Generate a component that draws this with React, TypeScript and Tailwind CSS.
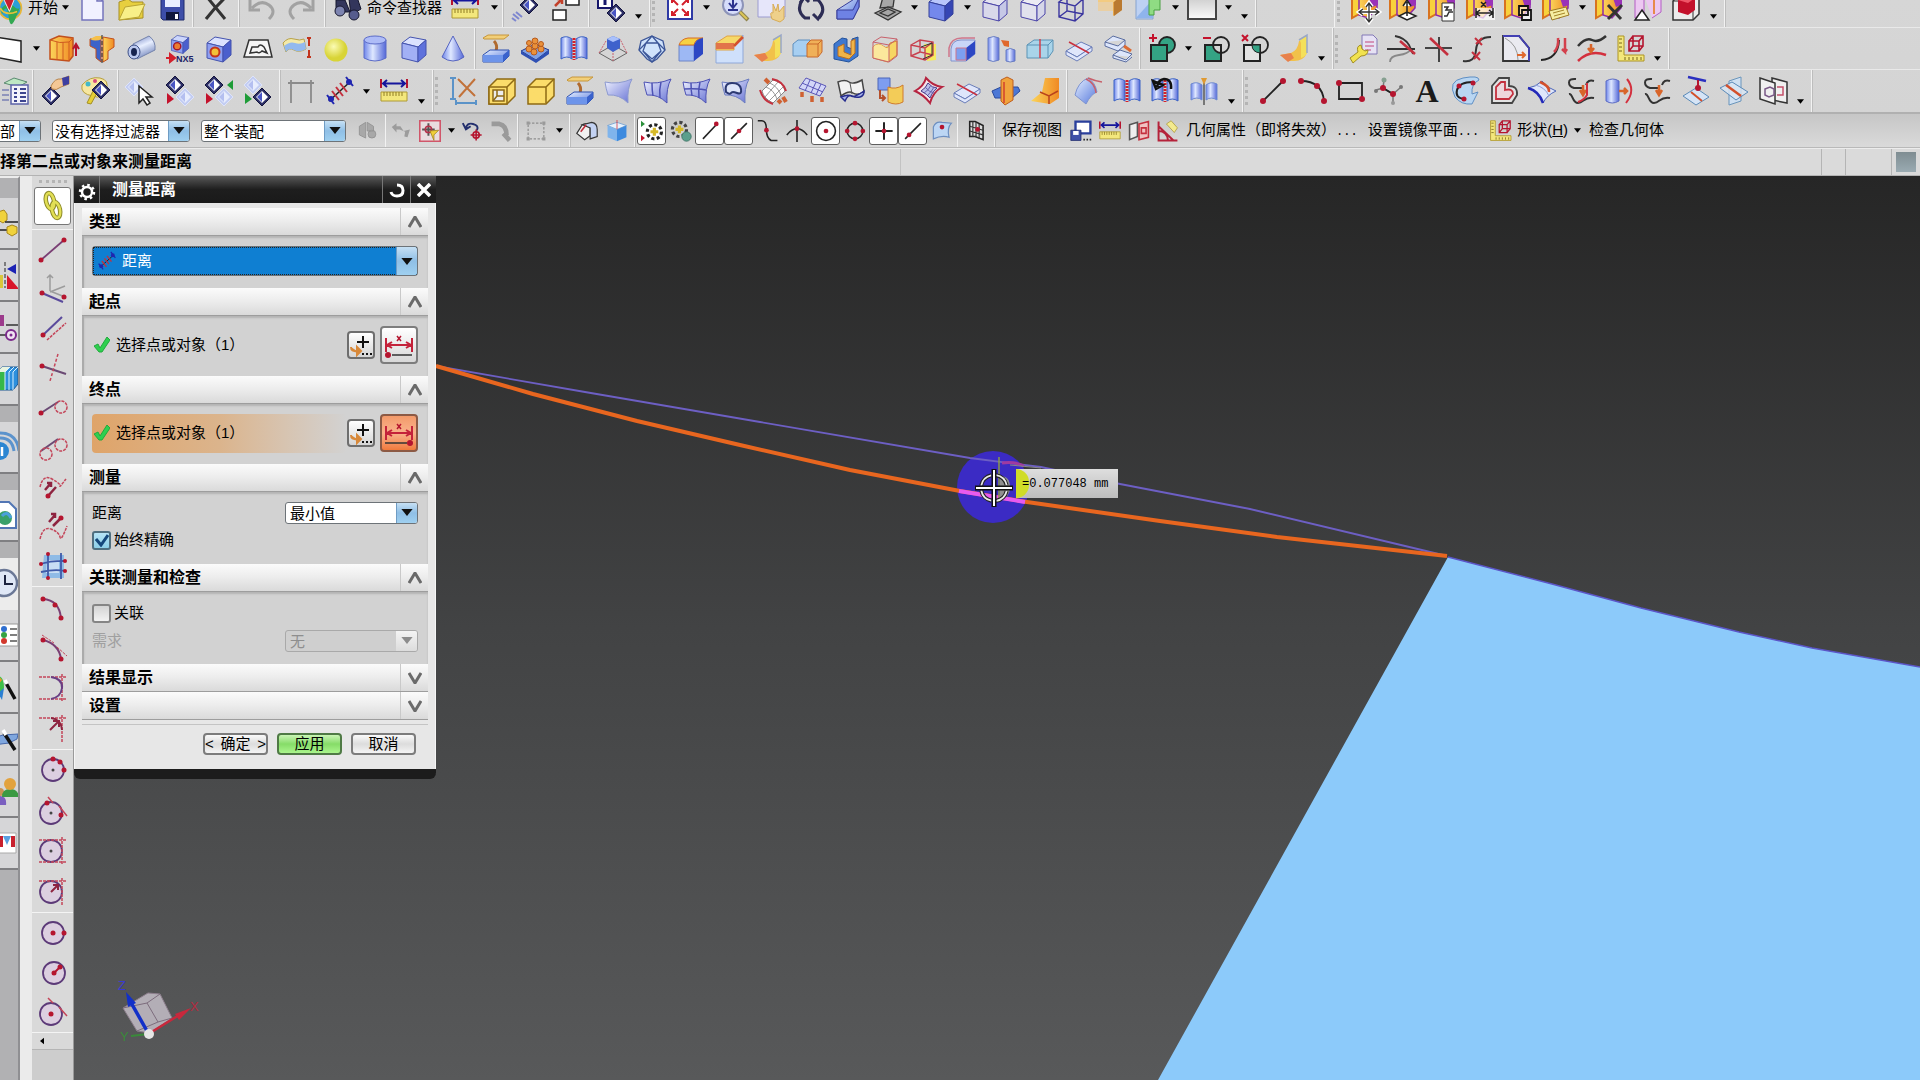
import { useState, type ReactNode } from "react";
import clsx from "clsx";

type CubeProps = { top: string; front: string; side: string; line: string };

function Cube({ top, front, side, line }: CubeProps) {
    return (
        <g stroke={line} strokeWidth="1" strokeLinejoin="round">
            <path d="M2 8 10 2 26 5 18 12z" fill={top} />
            <path d="M2 8 18 12V27L2 23z" fill={front} />
            <path d="M18 12 26 5V20L18 27z" fill={side} />
        </g>
    );
}

function Diamond({ x, y, pale }: { x: number; y: number; pale?: boolean }) {
    return (
        <g transform={`translate(${x} ${y})`}>
            <path
                d="M0-9 9 0 0 9-9 0z"
                fill={pale ? "#c3cdf2" : "#2c2f66"}
                stroke={pale ? "#dde3fa" : "#14143c"}
            />
            <path d="M0-6 6 0 0 6-6 0z" fill={pale ? "#e8edfd" : "#fff"} />
            <path d="M0-5V5L-5 0z" fill={pale ? "#b4bff0" : "#4a56c4"} />
        </g>
    );
}

function Dots({ at, r = 2 }: { at: number[][]; r?: number }) {
    return (
        <>
            {at.map(([x, y]) => (
                <circle key={`${x}-${y}`} cx={x} cy={y} r={r} fill="#b5152f" />
            ))}
        </>
    );
}

const book = (
    <g stroke="#3b62c4">
        <path d="M1 3q6-3 11 1v20q-5-4-11 0z" fill="url(#cyl)" />
        <path d="M27 3q-6-3-11 1v20q5-4 11 0z" fill="url(#cyl)" />
        <path d="M14 3v22" stroke="#d3202c" strokeWidth="3" strokeDasharray="2 1" />
    </g>
);

const ruler = (
    <>
        <path d="M1 2v9M27 2v9" stroke="#b5152f" strokeWidth="2" />
        <path d="M3 6.500h22M7 3 3 6.500 7 10M21 3l4 3.500L21 10" stroke="#15159c" strokeWidth="2" fill="none" />
        <path d="M1 15h26v9H1z" fill="#f3e77c" stroke="#ae9a35" />
        <path d="M4 15v4m3-4v4m3-4v4m3-4v4m3-4v4m3-4v4m3-4v4" stroke="#8f7c25" />
    </>
);

const extrudeSheet = (
    <>
        <path d="M1 3 6 0h21l-5 4H2z" fill="#f2cf78" stroke="#c6963c" />
        <path d="M12 6q4 4 2 10" stroke="#b06a2e" strokeWidth="3" />
        <path d="M1 20 8 15h19v6l-6 6H1z" fill="url(#blue)" stroke="#2c4fae" />
        <path d="M1 20h20v7l6-6v-6l-6 5" fill="#3a62cc" />
        <path d="M1 20h20v7H1z" fill="#6d94ea" />
    </>
);

const orangeFace = (
    <>
        <path d="M1 3 10 1v18L1 24z" fill="#f8d13c" stroke="#d8731f" strokeWidth="2" />
        <path d="M8 2h18v12l-9 10-9-3z" fill="url(#gold)" stroke="#8d2aa8" strokeWidth="1.500" />
        <path d="M17 1h10v10l-6 2z" fill="#9a32b8" />
    </>
);

const measureCube = (
    <>
        <path d="M2 1h6v19h20v6H2z" fill="#f3e77c" stroke="#ad9422" />
        <path d="M3 4h3M3 8h3M3 12h3M3 16h3M9 22v3m4-3v3m4-3v3m4-3v3m4-3v3" stroke="#77661c" />
        <path d="M13 6h10v10H13zM17 1h10v10H17zM13 6l4-5m6 5 4-5m-4 15 4-5m-14 5 4-5" stroke="#b5152f" strokeWidth="1.600" fill="none" />
    </>
);

const thinSlab = (
    <g fill="#dfe6fb" stroke="#6a7db8">
        <path d="M1 16 16 7l11 5-15 10z" />
        <path d="M1 16v4l11 6 15-10v-4L12 22z" />
        <path d="M4 7l20 11" stroke="#c9303e" strokeWidth="1.500" />
    </g>
);

const sBend = (
    <>
        <path d="M9 2C-1 1 1 9 7 11h8M27 4q-6-2-8 4M2 17c4-1 3 9 9 9s6-7 16-5" stroke="#333" strokeWidth="2" fill="none" />
        <path d="M16 8v8m-3-3 3 5 3-5" stroke="#d8652a" strokeWidth="2.500" fill="none" />
    </>
);

const icons: Record<string, ReactNode> = {
    globe: (
        <>
            <circle cx="12" cy="14" r="13" fill="#2c9fd6" stroke="#e8b637" strokeWidth="2" />
            <path d="M2 14q8-8 14-2t8 0-5 12-9 0-8-2z" fill="#32a852" />
            <path d="M4 3l7 15 6-15z" fill="#c81e2e" stroke="#fff" />
            <path d="M0 14q6 10 20 4" stroke="#e8c23a" strokeWidth="2" />
        </>
    ),
    newFile: <path d="M4 1h15l6 6v19H4zM19 1v6h6" fill="#f1f1ff" stroke="#7474bd" strokeWidth="1.500" />,
    open: (
        <>
            <path d="M1 26V8l9-3 4 3h11v16z" fill="#e7cf3f" stroke="#a78f25" />
            <path d="M1 26 7 13l20-3-6 13z" fill="#f8ef88" stroke="#b9a435" />
        </>
    ),
    save: (
        <>
            <path d="M3 2h23v24H5l-2-2z" fill="#3d4ea8" stroke="#1f2a6c" />
            <path d="M7 2h15v11H7z" fill="#e9f0ff" />
            <path d="M8 18h13v8H8z" fill="#11183d" />
            <path d="M17 20h3v5h-3z" fill="#fff" />
        </>
    ),
    cut: <path d="M5 3 23 25M24 3Q14 12 4 25" stroke="#333" strokeWidth="3" fill="none" />,
    undo: <path d="M22 25q8-8 0-14T5 14M3 6v10h10" stroke="#a2a2a2" strokeWidth="3" fill="none" />,
    redo: <path d="M6 25q-8-8 0-14t17 3M25 6v10H15" stroke="#a2a2a2" strokeWidth="3" fill="none" />,
    binoculars: (
        <g fill="#33365c" stroke="#17182f">
            <path d="M3 6h9l5 12H3zM16 5l8-2 4 12-10 6z" />
            <circle cx="7" cy="17" r="5" fill="#7d84b0" />
            <circle cx="21" cy="21" r="5" fill="#565c8d" />
        </g>
    ),
    ruler,
    diamondMove: (
        <>
            <Diamond x={18} y={11} />
            <path d="M2 20l6 5M5 18l6 5M1 24l4 3" stroke="#7e87cf" strokeWidth="2" />
        </>
    ),
    windows: (
        <g fill="#fff" stroke="#222" strokeWidth="1.500">
            <path d="M14 2h13v9H14zM1 16h13v10H1z" />
            <path d="M3 12 10 5M5 5h5v5" stroke="#c2402a" strokeWidth="2.500" fill="none" />
        </g>
    ),
    diamondInfo: (
        <>
            <path d="M1 2h14v12H1z" fill="#fff" stroke="#17176a" strokeWidth="2" />
            <path d="M8 3v8" stroke="#17176a" strokeWidth="3" />
            <Diamond x={19} y={19} />
        </>
    ),
    fit: (
        <>
            <path d="M2 1h24v24H2z" fill="#fff" stroke="#2f3aa5" strokeWidth="2" />
            <path d="M12 11 6 5m0 4V5h4M16 11l6-6m-4 0h4v4M12 15l-6 6m0-4v4h4M16 15l6 6m-4 0h4v-4" stroke="#d3202c" strokeWidth="2" fill="none" />
        </>
    ),
    zoom: (
        <>
            <circle cx="13" cy="11" r="10" fill="#d5dcfa" stroke="#8c93b8" strokeWidth="2" />
            <path d="M13 5v8M9 9l4 5 4-5M8 16h10" stroke="#2b318e" strokeWidth="2" fill="none" />
            <path d="M20 18l8 8" stroke="#8f844e" strokeWidth="4" />
            <path d="M20 18l7 7" stroke="#dcc657" strokeWidth="2" />
        </>
    ),
    pan: (
        <>
            <path d="M0 0h27v23H0z" fill="#e6e6fa" stroke="#9c9cd0" />
            <path d="M14 25q-3-8 1-6V10l3 7 2-7 1 8 5-6v13l-4 3z" fill="#eed08a" stroke="#d7ac58" />
        </>
    ),
    rotate: (
        <g stroke="#2d2d55" strokeWidth="3" fill="none">
            <path d="M6 5Q-2 16 8 24h5M22 24q8-9-1-18h-5" />
            <path d="M3 9 7 3l5 5M25 19l-4 6-5-5" />
        </g>
    ),
    perspective: (
        <g stroke="#383f9a">
            <path d="M2 16 24 2v11l-6 12H2z" fill="url(#blue)" />
            <path d="M2 16h16l6-12v9l-6 12H2z" fill="#6e82e4" />
        </g>
    ),
    laptop: (
        <g stroke="#333" fill="#a6a6a6" strokeWidth="1.300">
            <path d="M6 14 9 3l12-4-2 14z" />
            <path d="M1 19l13-6 13 5-13 8zM6 19l8-4 7 3-7 4z" />
        </g>
    ),
    cubeBlue: <Cube top="#b9c6fb" front="#7488ec" side="#3646b4" line="#34409b" />,
    cubeLine: <Cube top="#e4e4ef" front="#d8d8ea" side="#c6c8e6" line="#4b44a8" />,
    cubeLine2: <Cube top="#ebebf3" front="#e1e1ed" side="#d6d7e8" line="#4b44a8" />,
    cubeWire: (
        <g stroke="#3a359f" strokeWidth="1.400" fill="none">
            <path d="M2 8 10 2 26 5 18 12zM2 8v15l16 4 8-7V5M18 12v15M10 2v15l16 3M10 17l-8 6" />
        </g>
    ),
    orangeBlock: (
        <>
            <path d="M2 1h24v15l-9 6v-5H2z" fill="#e5a74c" />
            <path d="M2 8h15v9H2z" fill="#e9cfa4" />
            <path d="M2 1h24l-8 7H2z" fill="#f3cb81" />
            <path d="M18 8v14l8-6V1z" fill="#ba7a31" />
        </>
    ),
    pageGreen: (
        <>
            <path d="M2 1h17v24H2z" fill="#bdd1f3" stroke="#86a3cf" />
            <path d="M2 24 19 5v19z" fill="#8fb4ec" />
            <path d="M15 5h11v11h-6v5h-5z" fill="#8fdc83" stroke="#48a040" />
        </>
    ),
    swatch: <path d="M0-1h28v26H0z" fill="url(#grey)" stroke="#444" strokeWidth="2" />,
    faceMove: (
        <>
            {orangeFace}
            <path d="M18 10v17M9 18h18M15 13l3-4 3 4M15 24l3 4 3-4M12 15l-4 3 4 3M24 15l4 3-4 3" stroke="#fff" strokeWidth="4" fill="none" />
            <path d="M18 10v17M9 18h18M15 13l3-4 3 4M15 24l3 4 3-4M12 15l-4 3 4 3M24 15l4 3-4 3" stroke="#333" strokeWidth="1.300" fill="none" />
        </>
    ),
    facePull: (
        <>
            {orangeFace}
            <path d="M18 22V8M14 12l4-6 4 6M10 22l8 4 9-4-9-4z" fill="#fff" stroke="#222" strokeWidth="1.500" />
        </>
    ),
    faceList: (
        <>
            {orangeFace}
            <path d="M14 9h12v18H14z" fill="#fff" stroke="#333" />
            <path d="M16 13h4l-2 3h6M16 22h3l2-4h4" stroke="#333" strokeWidth="1.500" fill="none" />
        </>
    ),
    faceDim: (
        <>
            {orangeFace}
            <path d="M9 14h20v12H9z" fill="#fff" fillOpacity=".7" />
            <path d="M10 19h17M10 14v10M27 14v10M15 8l5 5m0-5-5 5M14 16l-4 3 4 3M23 16l4 3-4 3" stroke="#222" strokeWidth="1.500" fill="none" />
        </>
    ),
    faceFrame: (
        <>
            {orangeFace}
            <path d="M15 12h9v9h-9zM18 16h9v10h-9z" fill="#fff" fillOpacity=".6" stroke="#111" strokeWidth="1.800" />
        </>
    ),
    faceNote: (
        <>
            {orangeFace}
            <path d="M7 17l17-4 3 8-17 5z" fill="#f6eda2" stroke="#9c7a22" />
            <path d="M11 19l11-3M12 22l11-3" stroke="#a48327" />
        </>
    ),
    faceDelete: (
        <>
            {orangeFace}
            <path d="M13 11 26 25M27 11 13 25" stroke="#333" strokeWidth="3" />
        </>
    ),
    faceTri: (
        <>
            <path d="M1 3 10 1v18L1 24zM10 1h17v17l-9 6" fill="#ecc8f1" stroke="#b35cc4" />
            <path d="M20 2v18" stroke="#e78a4a" strokeWidth="2" />
            <path d="M8 16l7 10H1z" fill="#fff" stroke="#222" strokeWidth="1.500" />
        </>
    ),
    redBox: (
        <>
            <path d="M1 7v19h20l6-6V1H7z" fill="#ececec" stroke="#333" strokeWidth="1.500" />
            <path d="M1 7h20v19M21 7l6-6" fill="none" stroke="#333" />
            <path d="M6 6 13 2l10 2v12l-7 5-10-3z" fill="#c3102b" />
            <path d="M6 6l10 3 7-5-10-2z" fill="#ee5668" />
        </>
    ),
    sheet: <path d="M0 2 26 6v21L0 22z" fill="#fff" stroke="#222" strokeWidth="1.500" />,
    extrude: (
        <>
            <path d="M1 5 10 1l14 2v18l-4 5L1 24z" fill="url(#gold)" stroke="#c2501d" strokeWidth="1.500" />
            <path d="M1 5q10 4 19 2l4-4M8 7v18M14 7v18M20 7v19" stroke="#cf5b20" />
            <path d="M27 21V10m-3 4 3-5 3 5" stroke="#b5152f" strokeWidth="2" fill="none" />
        </>
    ),
    revolve: (
        <>
            <path d="M2 4 13 2v25l-5-4v-9l-6-3z" fill="#3d63c9" stroke="#c2501d" />
            <path d="M2 4l6-3h6v3q-7 3-12 0z" fill="#f6c04a" />
            <path d="M15 2l11 2v8l-6 4v8l-5 3z" fill="url(#gold)" stroke="#c2501d" />
            <path d="M14 0v28" stroke="#222" strokeDasharray="4 2" />
        </>
    ),
    tube: (
        <>
            <path d="M6 9 22 1q7 5 6 14L10 24z" fill="url(#tube)" stroke="#7483ab" />
            <ellipse cx="7" cy="17" rx="6" ry="7" fill="#bac8ee" stroke="#3b4e86" />
            <ellipse cx="7" cy="17" rx="3" ry="4" fill="#16234f" />
        </>
    ),
    nx5: (
        <>
            <g transform="translate(4 -1) scale(.72)">
                <Cube top="#ccd6fc" front="#8e9ff1" side="#4b5fcd" line="#4453ae" />
                <circle cx="10" cy="17" r="5" fill="#ec7c31" stroke="#a3152a" strokeWidth="2" />
            </g>
            <path d="M0 23h7m-3-4 5 4-5 4z" stroke="#d3202c" strokeWidth="2" fill="#d3202c" />
            <text x="10" y="27" fontSize="9" fontWeight="700" fill="#222266" fontFamily="Liberation Sans, sans-serif">NX5</text>
        </>
    ),
    holeCube: (
        <>
            <Cube top="#dbe2fe" front="#8e9ff1" side="#4b5fcd" line="#4453ae" />
            <circle cx="10" cy="17" r="4.500" fill="#f2c23a" stroke="#c2341d" strokeWidth="2" />
        </>
    ),
    emboss: (
        <g fill="#f5f5f5" stroke="#333" strokeWidth="1.500">
            <path d="M5 5h19l4 17H0z" />
            <path d="M6 18l2-6h6q2-4 6 0l3 6-5-2q-3 3-5 1z" />
        </g>
    ),
    warp: (
        <>
            <path d="M0 8Q5 2 11 4t10 0l2 10q-7 4-12 1T3 17z" fill="#f3e9a8" stroke="#b8a24a" />
            <path d="M1 11Q7 6 12 8t10-1l1 7q-7 4-12 1T3 17z" fill="#93b9ee" />
            <path d="M26 2v9M26 15v8M24 3h4M24 22h4" stroke="#c2341d" strokeWidth="2" />
        </>
    ),
    sphere: <circle cx="14" cy="15" r="11.500" fill="url(#yellow)" />,
    cylinder: (
        <g stroke="#5c6cc8">
            <path d="M3 5v18q11 6 22 0V5" fill="url(#cyl)" />
            <ellipse cx="14" cy="5" rx="11" ry="4" fill="#aebcf7" />
        </g>
    ),
    cube: <Cube top="#dbe2fe" front="#a2b0f5" side="#5f72dc" line="#4453ae" />,
    cone: <path d="M14 1 25 22q-11 8-22 0z" fill="url(#cyl)" stroke="#5664c0" />,
    extrudeSheet,
    pattern: (
        <>
            <path d="M0 16 14 9l14 6-13 10z" fill="#7ea0e6" stroke="#213a90" />
            <path d="M0 16l15 9 13-10v4L15 28 0 19z" fill="#2f50b4" />
            <g fill="#ea923c" stroke="#b85a1c">
                <circle cx="8" cy="14" r="3" />
                <circle cx="14" cy="11" r="3" />
                <circle cx="20" cy="14" r="3" />
                <circle cx="13" cy="17" r="3" />
                <circle cx="14" cy="6" r="3" />
                <circle cx="8" cy="8" r="2.500" />
                <circle cx="20" cy="9" r="2.500" />
            </g>
        </>
    ),
    book,
    hull: (
        <>
            <path d="M0 18 14 10l14 8-14 8z" fill="none" stroke="#666" />
            <path d="M0 18 7 6M28 18 21 4M14 26V16" stroke="#c9606e" strokeDasharray="2 1" />
            <path d="M8 4 14 1l7 3v9l-7 4-6-4z" fill="#3e62cc" />
            <path d="M8 4 14 1l7 3-7 3z" fill="#a9c0fb" />
        </>
    ),
    gem: (
        <g fill="#cfe2fb" stroke="#3c5698" strokeWidth="1.300">
            <path d="M14 1 25 6l2 9-8 9-5 3-5-3-8-9 2-9z" />
            <path d="M8 8h12l3 8-9 8-9-8zM14 1 8 8 1 15M14 1l6 7 7 7M5 16l9 11 9-11" fill="none" />
        </g>
    ),
    blend: (
        <>
            <path d="M2 10h15v16H2z" fill="#9db8f4" stroke="#6e86c8" />
            <path d="M2 10q2-6 9-7h15q-8 1-9 7z" fill="#f6d143" stroke="#d76d24" />
            <path d="M17 10q2-6 9-7v16l-9 7z" fill="#2c47c4" />
        </>
    ),
    chamfer: (
        <>
            <path d="M1 8h18l9-8v28H1z" fill="#cfe0fb" stroke="#8fa8d8" />
            <path d="M1 8 12 1h15l-8 9v5H1z" fill="#f6d968" stroke="#e0a245" />
            <path d="M1 8h18v6H1z" fill="#e2754a" />
            <path d="M19 11l9-9" stroke="#d3512c" strokeWidth="2.500" fill="none" />
        </>
    ),
    bend: (
        <>
            <path d="M0 20l11-2q7-3 8-12l8-2v14q-4 9-15 8H8z" fill="#f1c14a" />
            <path d="M0 20l11-2 3 5-6 4z" fill="#e8814c" />
            <path d="M19 4l8-4v18q-2 4-6 5V8z" fill="#f4e05a" />
            <path d="M19 5l8-5v18" fill="none" stroke="#98a6c8" strokeWidth="1.500" />
        </>
    ),
    split: (
        <>
            <path d="M0 9 5 5h12v16H0z" fill="#a7cff2" stroke="#5f8fbe" />
            <path d="M14 9l4-4h11v12l-4 5H14z" fill="#f0b058" stroke="#c9682a" />
            <path d="M14 9h11l4-4M25 9v12" stroke="#c9682a" fill="none" />
        </>
    ),
    shell: (
        <>
            <path d="M2 9l8-6 5 1v8l5 2V4l6-2v19l-9 6-15-3z" fill="#3f78cf" stroke="#24539c" />
            <path d="M6 12l6-3v8l7 3V6l4-2v14l-6 6-11-3z" fill="#f0b448" stroke="#b96d1f" />
        </>
    ),
    trim: (
        <>
            <path d="M2 12q5-5 10-1t7-3l7-2v14l-9 7-15-4z" fill="#f7d663" stroke="#d78d2c" />
            <path d="M2 12q5-5 10-1t6 1v15l-16-4z" fill="#fbe79c" />
            <path d="M2 7 10 2l16 2-8 6zM2 7v16l16 4V10M26 4v17l-8 6" fill="none" stroke="#c8606a" />
        </>
    ),
    trimCube: (
        <>
            <path d="M14 9h12v16l-9 1z" fill="#f5ea62" />
            <path d="M1 10l9-5 13 2v13l-8 5-14-4zM1 10l14 3 8-6M15 13v12M10 5v12l13 3M10 17l-9 4" fill="none" stroke="#c8404e" strokeWidth="1.400" />
            <path d="M11 12 22 8v12l-9 4" fill="none" stroke="#333" />
        </>
    ),
    wrap: (
        <>
            <path d="M3 14q1-9 10-9h14v14l-9 7H3z" fill="#c8d6f8" stroke="#8292cc" />
            <path d="M1 22V13Q3 3 14 3h13" stroke="#d0768a" fill="none" strokeWidth="1.500" />
            <path d="M18 13l9-7v13l-9 7z" fill="#2c47c4" />
            <path d="M8 13h10v12H8z" fill="#7d9ff0" stroke="#d0768a" />
        </>
    ),
    cylPair: (
        <g stroke="#6a7ec2" fill="url(#cyl)">
            <path d="M1 3v22q5 3 11 0V3q-5-3-11 0z" />
            <path d="M19 15v11q4 2 9 0V15q-5-3-9 0z" />
            <path d="M14 5l8 1v6l-5-1z" fill="#e0682c" stroke="none" />
        </g>
    ),
    slabBlue: (
        <g stroke="#5b93b5">
            <path d="M1 10 8 5h19v11l-5 7H1z" fill="#a9d4ea" />
            <path d="M1 10h21l5-5M22 10v13" fill="none" />
            <path d="M14 4v19" stroke="#d3404c" strokeWidth="1.500" />
        </g>
    ),
    thinSlab,
    slabPair: (
        <g fill="#dde6fb" stroke="#5a6da0">
            <path d="M1 7 9 1l12 4-7 6zM1 7v4l13 5 7-6V5" />
            <path d="M9 20l7-5 12 4-6 6zM9 20v3l13 4 6-5" />
            <path d="M20 11l7 5" stroke="#dc6a32" strokeWidth="3" />
        </g>
    ),
    unite: (
        <>
            <circle cx="19" cy="10" r="8" fill="#34a384" stroke="#222" strokeWidth="1.800" />
            <path d="M3 10h16v16H3z" fill="#34a384" stroke="#222" strokeWidth="2" />
            <path d="M5-1v8M1 3h8" stroke="#c4122c" strokeWidth="2" />
        </>
    ),
    subtract: (
        <>
            <path d="M3 10h16v16H3z" fill="#34a384" stroke="#222" strokeWidth="2" />
            <circle cx="19" cy="10" r="8" fill="#d6d6d6" stroke="#222" strokeWidth="1.800" />
            <path d="M11 10h8v8" fill="none" stroke="#222" strokeWidth="2" />
            <path d="M1 3h8" stroke="#c4122c" strokeWidth="2" />
        </>
    ),
    intersect: (
        <>
            <circle cx="19" cy="10" r="8" fill="none" stroke="#222" strokeWidth="1.800" />
            <path d="M3 10h16v16H3z" fill="#e3e3e3" stroke="#222" strokeWidth="2" />
            <path d="M11 10h8v8q-8-1-8-8z" fill="#34a384" stroke="#222" />
            <path d="M1 0l6 6m0-6L1 6" stroke="#c4122c" strokeWidth="2" />
        </>
    ),
    noteWrench: (
        <>
            <path d="M13 0h11l4 4v15H13z" fill="#e6e2f4" stroke="#8278b6" />
            <path d="M16 7h9M16 11h9M16 15h6" stroke="#d07aa4" strokeWidth="1.500" />
            <path d="M1 23l8-6q-2-6 3-7l1 4 3 2 3-1q0 6-7 6l-8 7z" fill="#f1e24f" stroke="#a28e23" />
        </>
    ),
    curveJoin: (
        <>
            <path d="M3 27q0-6 9-7t12-6" stroke="#888" strokeWidth="1.800" fill="none" />
            <path d="M0 14h28M8 1q10 2 14 9l4 9" stroke="#333" strokeWidth="1.800" fill="none" />
            <path d="M13 6l15 13" stroke="#c4303e" strokeWidth="2.500" />
        </>
    ),
    curveCross: (
        <>
            <path d="M0 13h27M14 2v25" stroke="#444" strokeWidth="2" />
            <path d="M5 3l18 17" stroke="#c4303e" strokeWidth="2.500" />
        </>
    ),
    curveS: (
        <>
            <path d="M0 26q12 2 13-11T28 2" stroke="#333" strokeWidth="2" fill="none" />
            <path d="M12 3l7 7M19 3l-6 6M9 17l8 8m0-8-6 7" stroke="#c4303e" strokeWidth="2" />
        </>
    ),
    pageCorner: (
        <>
            <path d="M1 1h16l10 12v13H1z" fill="#eaeaf0" stroke="#333" strokeWidth="1.800" />
            <path d="M1 1h16l10 12v13" fill="none" stroke="#4340b4" strokeWidth="1.800" />
            <path d="M3 3q13 7 13 22" stroke="#999" fill="none" />
            <path d="M15 20h8m-3-3 3 3-3 3" stroke="#e0682c" strokeWidth="2" fill="none" />
        </>
    ),
    curveOffset: (
        <>
            <path d="M1 25q17-1 18-20" stroke="#222" strokeWidth="2" fill="none" />
            <path d="M18 3q1 9-4 14M25 3v14l-3-3m3 3 2-3" stroke="#d3404c" strokeWidth="2.500" fill="none" />
        </>
    ),
    curveProject: (
        <>
            <path d="M0 11q8-9 14-6t14-4" stroke="#333" strokeWidth="2.500" fill="none" />
            <path d="M0 26q12-12 28-6" stroke="#d3303e" strokeWidth="2.500" fill="none" />
            <path d="M13 9v6m-3-2 3 4 3-4" stroke="#d8652a" strokeWidth="2.500" fill="none" />
        </>
    ),
    measureCube,
    list: (
        <>
            <path d="M2 6 12 1l13 4-9 5z" fill="#bfe8c4" stroke="#5b8a70" />
            <path d="M9 8h17v19H9z" fill="#f3f3fb" stroke="#5c63a8" strokeWidth="1.500" />
            <path d="M12 12h3m3 0h6M12 16h3m3 0h6M12 20h3m3 0h6M12 24h3m3 0h6" stroke="#3d4590" strokeWidth="2" />
            <path d="M0 13h7M0 18h7M0 23h7" stroke="#7a80b4" strokeWidth="1.500" />
        </>
    ),
    diamondHand: (
        <>
            <Diamond x={10} y={19} />
            <path d="M10 9q4-8 10-7l8-3v8l-8 3q-5 4-9 2z" fill="#f3c795" stroke="#b9854c" />
            <path d="M21 1l7-2v8l-6 2z" fill="#3e3fa0" />
        </>
    ),
    palette: (
        <>
            <path d="M1 8q8-9 18-7t6 12-13 6q-13-2-11-11z" fill="#f7e7a0" stroke="#b79f3f" />
            <circle cx="7" cy="7" r="2.500" fill="#43b8c9" />
            <circle cx="14" cy="4" r="2" fill="#d6487e" />
            <path d="M6 26l6-12 4 2-6 11z" fill="#e6cf35" stroke="#a28e23" />
            <Diamond x={20} y={13} />
        </>
    ),
    pick: (
        <>
            <Diamond x={8} y={10} pale />
            <path d="M13 9v17l4-4 4 6 3-2-4-6h6z" fill="#fff" stroke="#222" strokeWidth="1.500" />
        </>
    ),
    hideOne: (
        <>
            <Diamond x={10} y={8} />
            <Diamond x={20} y={20} pale />
            <path d="M2 16v11l7-5z" fill="#c4122c" />
        </>
    ),
    hideSwap: (
        <>
            <Diamond x={10} y={8} />
            <Diamond x={20} y={20} pale />
            <path d="M2 16v11l7-5z" fill="#c4122c" />
            <path d="M29 3v10l-6-5z" fill="#1e9c37" />
        </>
    ),
    showOne: (
        <>
            <Diamond x={10} y={8} pale />
            <Diamond x={19} y={20} />
            <path d="M2 16v11l7-5z" fill="#1e9c37" />
        </>
    ),
    dimension: <path d="M4 3v23M24 3v23M1 6h26" stroke="#8b8b8b" strokeWidth="1.800" />,
    distance: (
        <>
            <path d="M3 24 25 4" stroke="#222" strokeWidth="1.500" />
            <path d="M6 14l7 9M10 10l7 9M14 6l7 9" stroke="#c4303e" strokeWidth="2" />
            <circle cx="5" cy="22" r="3" fill="#2026b0" />
            <circle cx="23" cy="5" r="3" fill="#2026b0" />
            <path d="M1 18l7 9M20 0l7 9" stroke="#2026b0" strokeWidth="2" />
        </>
    ),
    sketchDim: (
        <>
            <path d="M1 1h6M4 1v21M1 22h6M7 26h20M7 23v5M27 23v5" stroke="#5b93c8" strokeWidth="2" />
            <path d="M9 2l17 17M26 2 10 20" stroke="#c2723a" strokeWidth="2" />
        </>
    ),
    boxOpen: (
        <g stroke="#8e6a14" strokeWidth="1.500" fill="#fbdc6a">
            <path d="M1 10 9 2h18v17l-8 8H1z" />
            <path d="M1 10h18v17H1zM19 10l8-8" />
            <path d="M5 13h11v11H5z" fill="#ececec" />
            <path d="M5 24l4-5V13m0 6h7" fill="none" />
        </g>
    ),
    boxFull: (
        <g stroke="#8e6a14" strokeWidth="1.500" fill="#fbdc6a">
            <path d="M1 10 9 2h18v17l-8 8H1z" />
            <path d="M1 10h18v17M19 10l8-8" />
        </g>
    ),
    surf1: <path d="M1 5q13 3 27-3-5 9-4 24-9-9-20-8-2-6-3-13z" fill="url(#surf)" stroke="#8d9ad0" />,
    surf2: (
        <g stroke="#4d52b4">
            <path d="M1 5q13 3 27-3-5 9-4 24-9-9-20-8-2-6-3-13z" fill="url(#surf)" />
            <path d="M9 6q0 7 1 13M18 5q-2 8-1 16" strokeWidth="1.500" />
        </g>
    ),
    surf3: (
        <g stroke="#4d52b4">
            <path d="M1 5q13 3 27-3-5 9-4 24-9-9-20-8-2-6-3-13z" fill="url(#surf)" />
            <path d="M9 6q0 7 1 13M18 5q-2 8-1 16M2 12q13-1 22 1" fill="none" strokeWidth="1.500" />
        </g>
    ),
    surf4: (
        <g stroke="#6b7cc0">
            <path d="M1 5q13 3 27-3-5 9-4 24-9-9-20-8-2-6-3-13z" fill="url(#surf)" />
            <path d="M5 15q-2-9 6-9t9 6-4 4-6 0-5-1z" fill="#dfe6fa" stroke="#2d3a72" strokeWidth="2" />
        </g>
    ),
    netRed: (
        <>
            <path d="M3 14 14 3q10 2 12 11L14 26Q5 22 3 14z" fill="#fff" stroke="#888" />
            <path d="M7 10q8 3 11 12M11 6q8 4 11 12M6 20 19 5M10 24 24 10" stroke="#999" />
            <path d="M13 2q11 2 14 12M1 13q3 11 13 14" stroke="#c4303e" strokeWidth="2" fill="none" />
            <path d="M6 2l4 4M24 20l3 5M19 23l3 3" stroke="#cf6132" strokeWidth="4" />
        </>
    ),
    netPins: (
        <>
            <path d="M8 1l20 8-6 10L1 11z" fill="#d3d6f8" stroke="#5b57b8" />
            <path d="M4 6l21 9M12 3 7 14M18 5l-5 11M23 7l-5 11" stroke="#5b57b8" />
            <path d="M4 15v5M14 19v6M24 20v5" stroke="#cf6132" strokeWidth="3.500" />
        </>
    ),
    bookOpen: (
        <>
            <path d="M1 5q7-3 11 0t13-2l2 12q-7 4-11 1T4 19z" fill="#f1f1f1" stroke="#444" strokeWidth="1.500" />
            <path d="M4 20q7-3 10-1t13-5q0 5-4 6t-8-1-7 5z" fill="#a7b4ea" stroke="#262c8e" strokeWidth="1.500" />
            <path d="M13 6l2 11" stroke="#555" />
        </>
    ),
    surfFlip: (
        <>
            <path d="M2 1h12v12H2z" fill="#7e9df0" stroke="#4c66b8" />
            <path d="M12 10q8 3 15-2v17q-7 4-15 0z" fill="#f3cc58" stroke="#cf7b2c" />
            <path d="M4 13v8h5m-3-3 3 3-3 3" stroke="#b5502c" strokeWidth="2" fill="none" />
        </>
    ),
    rugRed: (
        <>
            <path d="M1 14Q10 9 12 1q7 8 16 9-9 5-12 16-6-8-15-12z" fill="#f4e4ea" stroke="#b62440" strokeWidth="2" />
            <path d="M7 14q5-3 7-8 4 5 9 5-5 4-7 10-3-4-9-7z" fill="#b9bfe8" stroke="#4a3a88" />
            <path d="M10 16q5-3 7-8M14 18q4-4 6-8M11 10q4 5 9 6" stroke="#6a64b0" />
        </>
    ),
    crossBlocks: (
        <>
            <path d="M0 14l9-4h17l2 4-8 7H3z" fill="#4c78d6" stroke="#2a4a9c" />
            <path d="M9 3l6-3 6 3v20l-8 5-4-4z" fill="#f0a33c" stroke="#bf5d1e" />
            <path d="M12 5v21" stroke="#d3402c" strokeWidth="1.500" />
        </>
    ),
    goldFold: (
        <>
            <path d="M14 1h14v20l-9 6-19-3 11-9z" fill="url(#gold)" />
            <path d="M9 15l9 4 9-5M18 19v8" stroke="#b9431c" strokeWidth="1.500" fill="none" />
        </>
    ),
    surfCurl: (
        <>
            <path d="M1 18Q4 5 14 1q7 4 9 14-6 2-11 12z" fill="url(#blue)" stroke="#7d93d0" />
            <path d="M12 2q9 4 10 14M14 1q7 3 14 4" stroke="#c8606a" strokeWidth="1.500" fill="none" />
        </>
    ),
    bookTurn: (
        <>
            {book}
            <path d="M20 12q1-10-7-10-6 1-7 8M2 4l3 8 7-4z" stroke="#111" strokeWidth="2.500" fill="none" />
        </>
    ),
    bookPin: (
        <>
            <path d="M1 7q6-3 11 1v15q-5-4-11 0z" fill="url(#cyl)" stroke="#6e8ad0" />
            <path d="M27 7q-6-3-11 1v15q5-4 11 0z" fill="url(#cyl)" stroke="#6e8ad0" />
            <path d="M14 6v22" stroke="#777" strokeWidth="2" />
            <path d="M11 1h6l-3 7z" fill="#e09a32" />
        </>
    ),
    line: (
        <>
            <path d="M4 24 24 4" stroke="#222" strokeWidth="1.800" />
            <Dots r={3} at={[[4, 24], [24, 4]]} />
        </>
    ),
    arc: (
        <>
            <path d="M3 4q21 0 23 20" stroke="#222" strokeWidth="1.800" fill="none" />
            <Dots r={3} at={[[3, 4], [19, 9], [26, 24]]} />
        </>
    ),
    rect: (
        <>
            <path d="M3 6h23v16H3z" stroke="#222" strokeWidth="1.800" fill="none" />
            <Dots r={3} at={[[3, 6], [26, 22]]} />
        </>
    ),
    spline: (
        <>
            <path d="M2 13l7-2 10 6 7-6M9 11l1-8M19 17v9" stroke="#777" strokeWidth="1.500" fill="none" />
            <path d="M9 11l10 6" stroke="#222" strokeWidth="2" />
            <Dots r={3} at={[[9, 11], [19, 17]]} />
            <circle cx="10" cy="3" r="2.500" fill="#86a090" />
            <circle cx="2" cy="14" r="2" fill="#777" />
            <circle cx="19" cy="26" r="2" fill="#999" />
            <circle cx="27" cy="10" r="2" fill="#777" />
        </>
    ),
    letter: (
        <text x="14" y="25" textAnchor="middle" fontSize="32" fontWeight="700" fill="#1b1b1b" fontFamily="Liberation Serif, serif">A</text>
    ),
    surfPoints: (
        <>
            <path d="M4 20Q-4 4 12 1t16 2q-8 4-7 14l6-2-6 12q-11 1-17-7z" fill="#b9d6f2" stroke="#5f8fc4" />
            <path d="M13 22q-9-1-7-9t16-8" stroke="#222" strokeWidth="2" fill="none" />
            <Dots r={2.500} at={[[8, 9], [22, 6], [13, 22]]} />
        </>
    ),
    heartShape: (
        <>
            <path d="M2 26V9l7-8h10v8q9 0 8 9l-5 8z" fill="#e3e3e3" stroke="#444" strokeWidth="1.800" />
            <path d="M6 22V10l5-5h4v8q8-2 8 4l-4 5z" fill="#eed7dc" stroke="#c4303e" strokeWidth="1.800" />
        </>
    ),
    surfCurve: (
        <>
            <path d="M0 11q8-1 14-7 5 7 14 10-9 4-13 12-5-11-15-15z" fill="#dfe7fb" stroke="#4d67bc" />
            <path d="M0 11q11 3 15 15" stroke="#2429b8" strokeWidth="2.500" fill="none" />
            <path d="M7 8q10 2 14 11" stroke="#8f9fd8" fill="none" />
            <path d="M12 5q10 4 9 10" stroke="#d3502c" strokeWidth="2.500" fill="none" />
        </>
    ),
    sBendRed: (
        <>
            {sBend}
            <path d="M20 6v12q-3 5-9 7" stroke="#d3303e" strokeWidth="2" fill="none" />
        </>
    ),
    sBend,
    cylProject: (
        <>
            <path d="M1 4v20q6 4 13 0V4q-6-4-13 0z" fill="url(#cyl)" stroke="#5c6cc4" />
            <path d="M22 2q9 11-1 24" stroke="#d3303e" strokeWidth="2" fill="none" />
            <path d="M14 14h7m-2-3 3 3-3 3" stroke="#d8652a" strokeWidth="2.500" fill="none" />
        </>
    ),
    pinPlane: (
        <>
            <path d="M1 19 14 11l13 9-13 8z" fill="#d5e4f6" stroke="#5a8ab8" />
            <path d="M9 15l11 9" stroke="#d3502c" strokeWidth="2" />
            <path d="M6 0l18 4" stroke="#2a2fc0" strokeWidth="2.500" />
            <path d="M16 3v7" stroke="#b5152f" strokeWidth="2" />
            <Dots r={3} at={[[16, 11]]} />
        </>
    ),
    planeCut: (
        <>
            <path d="M9 4l12-4v24L9 28z" fill="#cfe0f2" stroke="#6a95bb" />
            <path d="M0 11 12 5l16 10-12 8z" fill="#dae6f4" fillOpacity=".8" stroke="#5a8ab8" />
            <path d="M6 8l15 11" stroke="#d3502c" strokeWidth="2.500" />
        </>
    ),
    mirrorPages: (
        <g stroke="#333" strokeWidth="1.500" fill="#f0f0f0">
            <path d="M13 1l15 4v21l-15-3z" />
            <path d="M1 1l15 5v21L1 22z" />
            <path d="M6 12l5-2 4 2v6l-5 2-4-2z" fill="none" stroke="#7a5a88" />
            <path d="M18 10h6v8h-6" fill="none" stroke="#c4506a" />
        </g>
    ),
    // selection bar
    grpGrey: <path d="M3 8l8-5v20l-8-4zM13 3l8 5v6h-8zM14 18a5 5 0 1 0 10 0 5 5 0 1 0-10 0" fill="#a8a8a8" stroke="#8f8f8f" />,
    branch: <path d="M1 9l6-5v4h5l4 6 8-2-3 10-4-1 1-6-7-3H7v4z" fill="#9c9c9c" />,
    snapSketch: (
        <>
            <path d="M1 1h26v26H1z" fill="#e9dcdf" stroke="#d0566a" strokeWidth="2" />
            <path d="M12 4v16M4 12h16" stroke="#555" strokeWidth="2.500" />
            <circle cx="12" cy="12" r="4" stroke="#b5304a" strokeWidth="2" />
            <path d="M14 14l11-1-6 6v7z" fill="#f0cf3b" stroke="#a28320" />
        </>
    ),
    snapUndo: (
        <>
            <path d="M5 11q1-8 9-6t5 8M1 4l4 8 6-4" stroke="#24306e" strokeWidth="2.500" fill="none" />
            <path d="M18 12v14M11 19h14" stroke="#b5152f" strokeWidth="2" />
            <circle cx="18" cy="19" r="4" fill="none" stroke="#b5152f" strokeWidth="2" />
        </>
    ),
    pathGrey: <path d="M2 5h10q9 2 9 14M17 17l8 9" stroke="#9a9a9a" strokeWidth="6" fill="none" />,
    marquee: (
        <>
            <path d="M4 4h20v20H4z" fill="none" stroke="#8d8d8d" strokeWidth="1.500" strokeDasharray="3 2" />
            <path d="M2 2h4v4H2zM22 2h4v4h-4zM2 22h4v4H2zM22 22h4v4h-4z" fill="#9a9a9a" />
        </>
    ),
    eraser: (
        <g stroke="#333" fill="#f1f1f1" strokeWidth="1.500">
            <path d="M1 17 8 6q6-3 10 2v12l-7 5z" />
            <path d="M8 6l12-3q7 1 7 9v9l-9 3V10z" fill="#c3d2f2" />
            <path d="M6 15l7-9" stroke="#c4303e" strokeWidth="2" />
        </g>
    ),
    boxBlue: (
        <>
            <path d="M2 7 14 3l12 4-12 5z" fill="#e6f1fc" stroke="#6d9bce" />
            <path d="M2 7v15l12 5V12z" fill="#7fb4ec" />
            <path d="M26 7v15l-12 5V12z" fill="#3d8ade" />
            <path d="M14 0v12" stroke="#d3303e" />
        </>
    ),
    snapAll: (
        <>
            <path d="M0 1v8l5-4z" fill="#2a8f3a" />
            <path d="M0 19v8l5-4z" fill="#c4122c" />
            <circle cx="17" cy="15" r="9" fill="none" stroke="#222" strokeWidth="4" strokeDasharray="4 3" />
            <path d="M12 15h10M17 10v10" stroke="#d6ba28" strokeWidth="4" />
        </>
    ),
    snapOff: (
        <>
            <circle cx="12" cy="12" r="9" fill="none" stroke="#444" strokeWidth="4" strokeDasharray="4 3" />
            <path d="M7 12h10M12 7v10" stroke="#d6ba28" strokeWidth="4" />
            <circle cx="21" cy="21" r="6" fill="#5b9f8c" stroke="#396e60" />
        </>
    ),
    snapEnd: (
        <>
            <path d="M5 24 22 6" stroke="#222" strokeWidth="2" />
            <Dots r={3} at={[[22, 5]]} />
        </>
    ),
    snapMid: (
        <>
            <path d="M4 24 24 4" stroke="#222" strokeWidth="2" />
            <Dots r={3} at={[[14, 14]]} />
        </>
    ),
    snapControl: (
        <>
            <path d="M1 1h5q6 0 6 11t6 14h8" stroke="#222" strokeWidth="2" fill="none" />
            <Dots r={3} at={[[12, 13]]} />
        </>
    ),
    snapCross: (
        <>
            <path d="M14 0v28M1 19q13-16 26 0" stroke="#222" strokeWidth="2" fill="none" />
            <Dots r={3} at={[[14, 11]]} />
        </>
    ),
    snapCenter: (
        <>
            <circle cx="14" cy="14" r="12" fill="none" stroke="#222" strokeWidth="2" />
            <Dots r={3} at={[[14, 14]]} />
        </>
    ),
    snapQuad: (
        <>
            <circle cx="14" cy="14" r="10" fill="none" stroke="#222" strokeWidth="2" />
            <Dots r={3} at={[[14, 4], [14, 24], [4, 14], [24, 14]]} />
        </>
    ),
    snapPoint: (
        <>
            <path d="M14 3v22M3 14h22" stroke="#222" strokeWidth="2.500" />
            <Dots r={3} at={[[14, 14]]} />
        </>
    ),
    snapOn: (
        <>
            <path d="M4 24 24 4" stroke="#222" strokeWidth="2" />
            <Dots r={3} at={[[9, 19]]} />
        </>
    ),
    snapFace: (
        <>
            <path d="M3 24V9Q6 1 14 3l12 1q-6 6-3 18-9-3-20 2z" fill="#bcd6f4" stroke="#6d8fc0" strokeWidth="1.500" />
            <Dots r={3} at={[[14, 9]]} />
        </>
    ),
    gridBook: (
        <>
            <path d="M6 2h7l10 5v18l-10-4H6z" fill="#ddd" stroke="#222" strokeWidth="2" />
            <path d="M10 2v19M14 3v19M18 5v19M6 8l17 5M6 14l17 5" stroke="#333" strokeWidth="1.500" />
            <Dots r={3} at={[[16, 12]]} />
        </>
    ),
    saveView: (
        <>
            <path d="M7 2h19v15H7z" fill="#fff" stroke="#2a3f9c" strokeWidth="3" />
            <path d="M1 13h13v13H1z" fill="#3f51a8" stroke="#1f2a6c" />
            <path d="M4 14h7v5H4z" fill="#fff" />
            <path d="M17 25h2m2 0h2m2 0h2" stroke="#222" strokeWidth="2" />
        </>
    ),
    mirror3d: (
        <>
            <path d="M2 6l10-3v18L2 25z" fill="#eee" stroke="#555" strokeWidth="2" />
            <path d="M14 5l12-3v20l-12 3z" fill="#f0c2c2" stroke="#c4303e" strokeWidth="2" />
            <path d="M17 10h6v7h-6z" fill="none" stroke="#c4303e" strokeWidth="2" />
        </>
    ),
    angle: (
        <>
            <path d="M2 2v24h24M2 14q11 0 12 12M2 8l19 18" stroke="#b5223a" strokeWidth="2.500" fill="none" />
            <path d="M12 5l6-4 8 9-4 6z" fill="#f3ea8e" stroke="#ad9b3b" />
        </>
    ),
    // curve bar at the left
    infer: (
        <g fill="none" stroke="#8d8a2a" strokeWidth="4.500">
            <ellipse cx="11" cy="9" rx="4" ry="8" transform="rotate(-12 11 9)" />
            <ellipse cx="17" cy="18" rx="4" ry="8" transform="rotate(-12 17 18)" />
            <g stroke="#e2df55" strokeWidth="2.500">
                <ellipse cx="11" cy="9" rx="4" ry="8" transform="rotate(-12 11 9)" />
                <ellipse cx="17" cy="18" rx="4" ry="8" transform="rotate(-12 17 18)" />
            </g>
        </g>
    ),
    vLine: (
        <>
            <path d="M2 24 25 4" stroke="#7a3f74" strokeWidth="1.800" />
            <Dots r={2.500} at={[[2, 24], [25, 4]]} />
        </>
    ),
    vAxes: (
        <>
            <path d="M11 16V1M11 17l15-6M11 16l15 6M8 3l3-3 3 3" stroke="#9c9c9c" strokeWidth="1.500" fill="none" />
            <path d="M3 18l21 9" stroke="#5a4a9c" strokeWidth="2" />
            <Dots r={2.500} at={[[3, 18], [25, 22]]} />
        </>
    ),
    vParallel: (
        <>
            <path d="M4 20 23 2" stroke="#5a4a9c" strokeWidth="2" />
            <path d="M8 25 27 8" stroke="#c4465a" strokeWidth="1.500" strokeDasharray="3 1" />
            <Dots r={2.500} at={[[4, 20]]} />
        </>
    ),
    vPerp: (
        <>
            <path d="M3 12l24 8" stroke="#6b4a74" strokeWidth="2" />
            <path d="M19 0 11 27" stroke="#c4465a" strokeWidth="1.500" strokeDasharray="3 2" />
            <Dots r={2.500} at={[[3, 12]]} />
        </>
    ),
    vTangent: (
        <>
            <path d="M2 19 19 8" stroke="#6b4a74" strokeWidth="2" />
            <circle cx="22" cy="13" r="6" fill="none" stroke="#c4465a" strokeWidth="1.500" strokeDasharray="3 1" />
            <Dots r={2.500} at={[[2, 19]]} />
        </>
    ),
    vTangent2: (
        <>
            <path d="M2 17 19 5" stroke="#6b4a74" strokeWidth="2" />
            <circle cx="22" cy="11" r="6" fill="none" stroke="#c4465a" strokeWidth="1.500" strokeDasharray="3 1" />
            <circle cx="7" cy="20" r="6" fill="none" stroke="#c4465a" strokeWidth="1.500" strokeDasharray="3 1" />
        </>
    ),
    vArrow1: (
        <>
            <path d="M1 14Q4 1 13 6t8 7 6-7" stroke="#c4465a" strokeWidth="1.500" fill="none" strokeDasharray="3 1" />
            <path d="M9 23 17 14M6 17l6-7M8 10h4v4" stroke="#8e2440" strokeWidth="2.500" fill="none" />
            <Dots r={2.500} at={[[9, 23]]} />
        </>
    ),
    vArrow2: (
        <>
            <path d="M1 26Q4 13 12 16t9 8 7-11" stroke="#c4465a" strokeWidth="1.500" fill="none" strokeDasharray="3 1" />
            <path d="M14 13 22 5M10 9l6-7M12 1h4v4" stroke="#8e2440" strokeWidth="2.500" fill="none" />
            <Dots r={2.500} at={[[22, 5]]} />
        </>
    ),
    vPatch: (
        <>
            <path d="M5 3h20v23H3z" fill="#8fbbe6" />
            <path d="M8 8h12v13H7z" fill="#c9def4" />
            <path d="M9 1v26M22 1v26M1 12q13-4 26-3M2 20q13-3 25-1" stroke="#3f5aa8" strokeWidth="1.800" fill="none" />
            <Dots at={[[9, 2], [26, 9], [2, 12], [26, 19], [9, 26]]} />
        </>
    ),
    vArc: (
        <>
            <path d="M4 6q16 1 18 19" stroke="#7a3f74" strokeWidth="2" fill="none" />
            <Dots r={2.500} at={[[4, 6], [16, 12], [22, 25]]} />
        </>
    ),
    vArcTan: (
        <>
            <path d="M4 6q16 4 18 19" stroke="#7a3f74" strokeWidth="2" fill="none" />
            <path d="M3 1l12 8M18 13l10 9" stroke="#c4465a" strokeDasharray="3 1" />
            <Dots r={2.500} at={[[4, 6], [22, 25]]} />
        </>
    ),
    vFillet: (
        <>
            <path d="M0 3h28M0 25h28M23 0v28" stroke="#c4465a" strokeWidth="1.500" strokeDasharray="3 1" />
            <path d="M12 3q12 2 11 11t-11 11" stroke="#6a3f84" strokeWidth="2" fill="none" />
        </>
    ),
    vFilletR: (
        <>
            <path d="M0 3h28M23 0v28" stroke="#c4465a" strokeWidth="1.500" strokeDasharray="3 1" />
            <path d="M12 3q10 1 11 12M11 15l9-9M14 6h6v6" stroke="#8e2440" strokeWidth="2" fill="none" />
        </>
    ),
    vCircle3: (
        <>
            <circle cx="14" cy="14" r="11" fill="#dccfe0" stroke="#5c3a78" strokeWidth="1.800" />
            <circle cx="14" cy="14" r="1.500" fill="#444" />
            <Dots r={2.500} at={[[14, 3], [21, 6], [25, 14]]} />
        </>
    ),
    vCircleTan: (
        <>
            <circle cx="12" cy="16" r="11" fill="#dccfe0" stroke="#5c3a78" strokeWidth="1.800" />
            <circle cx="12" cy="16" r="1.500" fill="#444" />
            <path d="M9 0l5 6M20 9l8 10" stroke="#c4465a" strokeWidth="1.500" />
            <Dots r={2.500} at={[[8, 6], [22, 18]]} />
        </>
    ),
    vCircleBox: (
        <>
            <circle cx="12" cy="14" r="11" fill="#dccfe0" stroke="#5c3a78" strokeWidth="1.800" />
            <circle cx="12" cy="14" r="1.500" fill="#444" />
            <path d="M0 3h28M0 25h28M23 0v28" stroke="#c4465a" strokeWidth="1.500" strokeDasharray="3 1" />
        </>
    ),
    vCircleR: (
        <>
            <circle cx="12" cy="14" r="11" fill="#dccfe0" stroke="#5c3a78" strokeWidth="1.800" />
            <path d="M0 3h28M23 0v28" stroke="#c4465a" strokeWidth="1.500" strokeDasharray="3 1" />
            <path d="M12 14l7-7M14 7h5v5" stroke="#8e2440" strokeWidth="2" fill="none" />
        </>
    ),
    vCirclePt: (
        <>
            <circle cx="14" cy="14" r="11" fill="#dccfe0" stroke="#5c3a78" strokeWidth="1.800" />
            <Dots r={2.500} at={[[14, 14], [25, 14]]} />
        </>
    ),
    vCircleRad: (
        <>
            <circle cx="15" cy="14" r="11" fill="#dccfe0" stroke="#5c3a78" strokeWidth="1.800" />
            <path d="M15 14l6-6" stroke="#b5152f" strokeWidth="2" />
            <Dots r={2.500} at={[[15, 14], [21, 8]]} />
        </>
    ),
    vCircleTan2: (
        <>
            <circle cx="12" cy="16" r="11" fill="#dccfe0" stroke="#5c3a78" strokeWidth="1.800" />
            <path d="M9 0l5 5M20 9l8 9" stroke="#c4465a" strokeWidth="1.500" />
            <Dots r={2.500} at={[[12, 16]]} />
        </>
    ),
    // resource bar tabs
    tabAssembly: (
        <g fill="#f0d23c" stroke="#a8871d">
            <path d="M6 3l6-2 3 4v6l-4 3-5-3z" />
            <path d="M13 13h14M8 21h8" stroke="#222" strokeWidth="1.500" />
            <path d="M15 18l5-2 5 2v6l-5 3-5-3z" />
        </g>
    ),
    tabConstraint: (
        <>
            <path d="M24 3v10l-9-5z" fill="#1c22b4" />
            <path d="M15 14v14h12z" fill="#d8152a" />
            <path d="M13 1v26" stroke="#222" strokeDasharray="4 2" />
            <path d="M7 14h4v13H7z" fill="#d9c73b" />
        </>
    ),
    tabPart: (
        <>
            <path d="M8 2h4v11H8z" fill="#9c3b8c" />
            <path d="M14 12h12M8 22h8" stroke="#333" strokeWidth="1.500" />
            <circle cx="19" cy="22" r="5" fill="#f0e3f2" stroke="#7b2a8c" strokeWidth="2" />
            <circle cx="19" cy="22" r="1.500" fill="#7b2a8c" />
        </>
    ),
    tabBooks: (
        <>
            <path d="M5 7l5-5h16v17l-5 6H5z" fill="#2d8fdd" stroke="#1b5690" />
            <path d="M5 7h8v18H5z" fill="#37b84a" />
            <path d="M13 7l5-5M5 7l5-5h8l-5 5z" fill="#e8f4e0" />
            <path d="M13 7l5-5M17 7l5-5M13 7v18M17 7v18M21 7v18M21 7l5-5" stroke="#d8f0ff" />
        </>
    ),
    tabInfo: (
        <>
            <circle cx="8" cy="18" r="9" fill="#2b86d2" />
            <path d="M10 14v9" stroke="#fff" strokeWidth="2.500" />
            <path d="M7 5q13-1 15 13M8 0q17 0 19 18" stroke="#5c93cc" strokeWidth="3" fill="none" />
        </>
    ),
    tabWeb: (
        <>
            <path d="M4 1h13l7 7v19H4z" fill="#fff" stroke="#5276b4" strokeWidth="2" />
            <circle cx="13" cy="17" r="7" fill="#3aa06a" />
            <path d="M10 15q5-6 9 2" stroke="#4c9fdc" strokeWidth="3" fill="none" />
        </>
    ),
    tabClock: (
        <>
            <circle cx="12" cy="14" r="13" fill="#dfe7f6" stroke="#6b7896" strokeWidth="2.500" />
            <path d="M13 6v9h8" stroke="#1c2440" strokeWidth="2" fill="none" />
        </>
    ),
    tabLegend: (
        <>
            <path d="M3 3h23v22H3z" fill="#fff" stroke="#999" />
            <circle cx="12" cy="8" r="3" fill="#2f6fd0" />
            <circle cx="12" cy="14" r="3" fill="#35a343" />
            <circle cx="12" cy="20" r="3" fill="#d2382c" />
            <path d="M18 8h7M18 14h7M18 20h7" stroke="#555" strokeWidth="1.500" />
        </>
    ),
    tabWand: (
        <>
            <path d="M6 3q6 0 6 12l-6 11z" fill="#3fc04a" />
            <path d="M6 2l4 5-4 5z" fill="#e9982c" />
            <path d="M6 20l6-5-2 12z" fill="#2a7fd2" />
            <path d="M14 10l9 16" stroke="#111" strokeWidth="3.500" />
            <path d="M13 7l2 4" stroke="#fff" strokeWidth="3.500" />
        </>
    ),
    tabWandMap: (
        <>
            <path d="M1 13l10-3 15-1-1 5-8 4-16 2z" fill="#7fa6de" stroke="#4668ab" />
            <path d="M12 8l11 17" stroke="#111" strokeWidth="3.500" />
            <path d="M11 5l3 5" stroke="#fff" strokeWidth="3.500" />
        </>
    ),
    tabUsers: (
        <>
            <path d="M1 28q0-9 7-9t6 9z" fill="#7a5fc0" />
            <circle cx="8" cy="15" r="4" fill="#c99455" />
            <path d="M10 20q0-8 8-8t9 8z" fill="#3b9a44" />
            <circle cx="18" cy="7" r="6" fill="#e2a23e" />
        </>
    ),
    tabSheet: (
        <>
            <path d="M4 4h20v20H4z" fill="#fff" stroke="#aaa" />
            <path d="M7 7h4v11H7zM19 7h4v11h-4z" fill="#c8202e" />
            <path d="M11 7h8l-4 9z" fill="#5aa0e0" />
        </>
    ),
};

function Icon({ name, className = "size-7" }: { name: string; className?: string }) {
    return (
        <svg viewBox="0 0 28 28" className={clsx("shrink-0 overflow-visible", className)} fill="none" aria-hidden="true">
            {icons[name]}
        </svg>
    );
}

function Triangle({ className = "w-[7px] h-[5px] fill-black" }: { className?: string }) {
    return (
        <svg viewBox="0 0 8 5" className={className} aria-hidden="true">
            <path d="M0 0h8L4 5z" />
        </svg>
    );
}

// "v" opens a drop-down, "_" is the overflow arrow, ":" is the grip
function Tool({ name, small }: { name: string; small?: boolean }) {
    if (name === ":") {
        return <span className="w-[9px] h-7 shrink-0 border-l-3 border-dotted border-[#b4b4b4]" />;
    }
    if (name === "v") {
        return (
            <button aria-label="下拉" className="w-[15px] h-full shrink-0 flex items-center justify-center">
                <Triangle />
            </button>
        );
    }
    if (name === "_") {
        return (
            <button aria-label="选项" className="w-[17px] h-full shrink-0 flex items-end justify-center pb-2">
                <Triangle />
            </button>
        );
    }
    return (
        <button aria-label={name} className="flex-1 min-w-0 h-full flex items-center justify-center">
            <Icon name={name} className={small ? "size-[22px]" : "size-7"} />
        </button>
    );
}

function Group({ tools, width, small }: { tools: string; width: string; small?: boolean }) {
    return (
        <div className={clsx("h-full shrink-0 flex items-center px-0.5 border-r border-[#f2f2f2] shadow-[1px_0_0_#bdbdbd]", width)}>
            {tools.split(" ").map((name, i) => (
                <Tool key={i} name={name} small={small} />
            ))}
        </div>
    );
}

function Combo({
    label,
    options,
    className,
    height = "h-[22px]",
    text = "pl-0.5 text-black",
    disabled,
}: {
    label: string;
    options: string[];
    className: string;
    height?: string;
    text?: string;
    disabled?: boolean;
}) {
    return (
        <div
            className={clsx(
                "relative shrink-0 rounded-[3px] border",
                height,
                className,
                disabled ? "border-[#a9a9a9] bg-[#cfcfcf]" : "border-[#6d7378] bg-white"
            )}
        >
            <select
                aria-label={label}
                disabled={disabled}
                className={clsx("size-full appearance-none bg-transparent text-[15px] leading-5 outline-none", text)}
            >
                {options.map(option => (
                    <option key={option}>{option}</option>
                ))}
            </select>
            <span
                className={clsx(
                    "pointer-events-none absolute inset-y-0 right-0 w-[21px] rounded-r-[2px] flex items-center justify-center",
                    disabled
                        ? "bg-gradient-to-b from-[#f4f4f4] to-[#dcdcdc]"
                        : "bg-gradient-to-b from-[#c6e0f4] via-[#8fbfe6] to-[#9fd0f0] border-l border-[#6f9cc4]"
                )}
            >
                <Triangle className={clsx("w-3 h-[7px]", disabled ? "fill-[#8c8c8c]" : "fill-[#111]")} />
            </span>
        </div>
    );
}

const snaps = [
    ["snapAll", true],
    ["snapOff", false],
    ["snapEnd", true],
    ["snapMid", true],
    ["snapControl", false],
    ["snapCross", false],
    ["snapCenter", true],
    ["snapQuad", false],
    ["snapPoint", true],
    ["snapOn", true],
    ["snapFace", false],
] as const;

function Toolbars() {
    return (
        <header className="bg-gradient-to-b from-[#d6d6d6] to-[#d3d3d3]">
            <div className="-mt-3 h-10 flex items-center border-b border-[#e9e9e9]">
                <div className="w-[193px] h-full shrink-0 flex items-center border-r border-[#f2f2f2] shadow-[1px_0_0_#bdbdbd]">
                    <button className="w-[72px] shrink-0 flex items-center gap-1 text-[15px] leading-[15px] whitespace-nowrap">
                        <Icon name="globe" className="w-6 h-7" />
                        开始
                        <Triangle />
                    </button>
                    <Tool name="newFile" />
                    <Tool name="open" />
                    <Tool name="save" />
                </div>
                <Group width="w-[46px]" tools="cut" />
                <Group width="w-[86px]" tools="undo redo" />
                <div className="w-[178px] h-full shrink-0 flex items-center pl-1 border-r border-[#f2f2f2] shadow-[1px_0_0_#bdbdbd]">
                    <button className="flex shrink-0 items-center gap-1.5 text-[15px] leading-[15px] whitespace-nowrap pl-1">
                        <Icon name="binoculars" />
                        命令查找器
                    </button>
                    <Tool name="ruler" />
                    <Tool name="v" />
                </div>
                <Group width="w-[86px]" tools="diamondMove windows" />
                <Group width="w-[61px]" tools="diamondInfo _" />
                <Group
                    width="w-[606px]"
                    tools=": fit v zoom pan rotate perspective laptop v cubeBlue v cubeLine cubeLine2 cubeWire orangeBlock pageGreen v swatch v _"
                />
                <div className="w-[79px] h-full shrink-0 border-r border-[#f2f2f2]" />
                <Group
                    width="w-[390px]"
                    tools=": faceMove facePull faceList faceDim faceFrame faceNote v faceDelete faceTri redBox _"
                />
            </div>
            <div className="h-[42px] flex items-center border-b border-[#e9e9e9] -ml-3">
                <Group
                    width="w-[487px]"
                    tools="sheet v extrude revolve tube nx5 holeCube emboss warp sphere cylinder cube cone"
                />
                <Group
                    width="w-[665px]"
                    tools="extrudeSheet pattern book hull gem blend chamfer bend split shell trim trimCube wrap cylPair slabBlue thinSlab slabPair"
                />
                <Group width="w-[193px]" tools="unite v subtract intersect bend _" />
                <Group
                    width="w-[336px]"
                    tools=": noteWrench curveJoin curveCross curveS pageCorner curveOffset curveProject measureCube _"
                />
            </div>
            <div className="h-11 flex items-center border-b-2 border-[#b0b0b0]">
                <Group width="w-[33px]" tools="list" />
                <Group width="w-[85px]" tools="diamondHand palette" />
                <Group width="w-[162px]" tools="pick hideOne hideSwap showOne" />
                <Group width="w-[153px]" tools="dimension distance v ruler _" />
                <Group
                    width="w-[634px]"
                    tools=": sketchDim boxOpen boxFull extrudeSheet surf1 surf2 surf3 surf4 netRed netPins bookOpen surfFlip rugRed thinSlab crossBlocks goldFold"
                />
                <Group width="w-[176px]" tools="surfCurl book bookTurn bookPin _" />
                <Group
                    width="w-[569px]"
                    tools=": line arc rect spline letter surfPoints heartShape surfCurve sBendRed cylProject sBend pinPlane planeCut mirrorPages _"
                />
            </div>
            <div className="h-[34px] flex items-center border-b border-[#b9b9b9] bg-gradient-to-b from-[#c6c6c6] to-[#dadada] text-[15px] whitespace-nowrap">
                <div className="w-[386px] h-full shrink-0 flex items-center gap-[11px] border-r border-[#f2f2f2]">
                    <Combo label="类型过滤器" options={["全部"]} className="w-[61px] -ml-5" text="pl-1 text-black" />
                    <Combo label="选择过滤器" options={["没有选择过滤器"]} className="w-[138px]" />
                    <Combo label="选择范围" options={["整个装配"]} className="w-[145px]" />
                    <Icon name="grpGrey" className="size-[22px]" />
                </div>
                <Group small width="w-[132px]" tools="branch snapSketch v snapUndo pathGrey" />
                <Group small width="w-[52px]" tools="marquee v" />
                <Group small width="w-[65px]" tools="eraser boxBlue" />
                <div className="w-[323px] h-full shrink-0 flex items-center pl-0.5 border-r border-[#f2f2f2]">
                    {snaps.map(([name, on]) => (
                        <button
                            key={name}
                            aria-label={name}
                            aria-pressed={on}
                            className={clsx(
                                "w-[29px] h-7 shrink-0 flex items-center justify-center rounded-[3px]",
                                on && "border border-[#5f5f5f] bg-white"
                            )}
                        >
                            <Icon name={name} className="size-[22px]" />
                        </button>
                    ))}
                </div>
                <Group small width="w-[37px]" tools="gridBook" />
                <div className="h-full flex items-center pl-[7px]">
                    <button>保存视图</button>
                    <div className="w-[124px] h-full flex items-center px-1">
                        <Tool small name="saveView" />
                        <Tool small name="ruler" />
                        <Tool small name="mirror3d" />
                        <Tool small name="angle" />
                    </div>
                    <button>
                        几何属性（即将失效）<span className="font-mono text-xs">...</span>
                    </button>
                    <button className="ml-2.5">
                        设置镜像平面<span className="font-mono text-xs">...</span>
                    </button>
                    <button className="ml-2.5 flex items-center gap-1.5">
                        <Icon name="measureCube" className="size-[22px]" />
                        <span>
                            形状(<u>H</u>)
                        </span>
                        <Triangle />
                    </button>
                    <button className="ml-2">检查几何体</button>
                </div>
            </div>
            <div className="h-7 flex items-center border-t border-[#ececec] border-b border-b-[#b3b3b3] bg-[#dadada]">
                <p className="w-[900px] shrink-0 text-[16px] leading-6 font-bold whitespace-nowrap">择第二点或对象来测量距离</p>
                <div className="h-full flex-1 border-l border-[#c2c2c2]" />
                <div className="w-6 h-full border-l border-[#b4b4b4]" />
                <div className="w-[46px] h-full border-l border-[#b4b4b4]" />
                <div className="w-[29px] h-full border-l border-[#b4b4b4] flex items-center pl-1">
                    <span className="size-5 bg-gradient-to-b from-[#7f8d92] to-[#9aabb2]" />
                </div>
            </div>
        </header>
    );
}

const tabs = [
    "tabAssembly",
    "tabConstraint",
    "tabPart",
    "tabBooks",
    "gap",
    "tabInfo",
    "gap",
    "tabWeb",
    "gap",
    "tabClock",
    "tabLegend",
    "tabWand",
    "tabWandMap",
    "tabUsers",
    "tabSheet",
];

function ResourceBar() {
    const [active, setActive] = useState("tabClock");

    return (
        <nav className="w-8 shrink-0 bg-[#ebebeb] flex">
            <div className="w-5 overflow-hidden bg-[#b1b1b3] pt-5 border-t-2 border-[#ececec] border-r-2 border-r-[#8f8f92]">
                {tabs.map((tab, i) =>
                    tab === "gap" ?
                        <div key={i} className="h-4" />
                    :   <button
                            key={tab}
                            aria-label={tab}
                            onClick={() => setActive(tab)}
                            className={clsx(
                                "w-5 h-[52px] flex items-center justify-end border-b-2",
                                active === tab ? "bg-[#ececec] border-[#ececec]" : "bg-[#d6d6d8] border-[#7f7f82]"
                            )}
                        >
                            <Icon name={tab} />
                        </button>
                )}
            </div>
        </nav>
    );
}

const curveGroups = [
    { height: "h-[357px]", tools: "vLine vAxes vParallel vPerp vTangent vTangent2 vArrow1 vArrow2 vPatch" },
    { height: "h-[163px]", tools: "vArc vArcTan vFillet vFilletR" },
    { height: "h-[163px]", tools: "vCircle3 vCircleTan vCircleBox vCircleR" },
    { height: "h-[120px]", tools: "vCirclePt vCircleRad vCircleTan2" },
];

function CurveBar() {
    return (
        <div className="w-[42px] shrink-0 bg-[#cdcdcd] border-r border-[#9a9a9a]">
            <div className="bg-[#d9d9d9] border-b border-[#b5b5b5]">
                <div className="h-[54px] px-0.5 flex flex-col items-center border-b border-[#f4f4f4]">
                    <span className="mt-1 mb-1 w-7 border-t-3 border-dotted border-[#b4b4b4]" />
                    <button
                        aria-label="自动判断"
                        className="w-full h-[38px] rounded-[3px] border border-[#777] bg-white flex items-center justify-center"
                    >
                        <Icon name="infer" />
                    </button>
                </div>
                {curveGroups.map(group => (
                    <div key={group.tools} className={clsx("flex flex-col border-b border-[#f4f4f4] last:border-0", group.height)}>
                        {group.tools.split(" ").map(name => (
                            <button key={name} aria-label={name} className="flex-1 flex items-center justify-center">
                                <Icon name={name} />
                            </button>
                        ))}
                    </div>
                ))}
                <button aria-label="更多" className="h-4 pl-2 flex items-center">
                    <svg viewBox="0 0 5 8" className="w-1 h-2" aria-hidden="true">
                        <path d="M5 0v8L0 4z" />
                    </svg>
                </button>
            </div>
        </div>
    );
}

function Section({ title, height, children }: { title: string; height?: string; children?: ReactNode }) {
    const open = height !== undefined;

    return (
        <section>
            <button
                aria-expanded={open}
                className="w-full h-7 flex items-center justify-between bg-gradient-to-b from-[#fbfbfb] via-[#ececec] to-[#dadada] border-b border-[#9d9d9d]"
            >
                <span className="pl-[7px] text-[16px] leading-6 font-bold">{title}</span>
                <span className="w-7 h-full flex items-center justify-center border-l border-[#c9c9c9]">
                    <svg viewBox="0 0 14 12" className={clsx("w-3.5 h-3", !open && "rotate-180")} aria-hidden="true">
                        <path d="M1 11 7 1l6 10" fill="none" stroke="#6a6a6a" strokeWidth="3" />
                    </svg>
                </span>
            </button>
            {open && (
                <div className={clsx("pl-2 pr-2.5 bg-[#d2d2d2] border-l-2 border-[#ababab] shadow-[inset_0_2px_2px_#b4b4b4]", height)}>
                    {children}
                </div>
            )}
        </section>
    );
}

function PointRow({ active }: { active?: boolean }) {
    return (
        <div className="h-full flex items-center pb-0.5">
            <div
                className={clsx(
                    "h-[39px] flex-1 flex items-center gap-1.5 rounded-[4px] pl-0.5 text-[15px]",
                    active && "bg-gradient-to-r from-[#dfa469] via-[#dbb48c] to-[#d2d2d2]"
                )}
            >
                <svg viewBox="0 0 16 16" className="size-4" aria-hidden="true">
                    <path d="M0 9l4-2 2 4 7-11 3 3-8 12H5z" fill="#2fd04f" stroke="#22a93e" />
                </svg>
                选择点或对象（1）
            </div>
            <button
                aria-label="点构造器"
                className="size-7 mr-[5px] rounded-[4px] border-2 border-[#6e6e6e] bg-gradient-to-b from-white to-[#d5d5d5] flex items-center justify-center"
            >
                <svg viewBox="0 0 24 24" className="size-6" fill="none" aria-hidden="true">
                    <path d="M14 3v12M8 9h12" stroke="#111" strokeWidth="2" />
                    <path d="M2 14q0 5 6 4M8 14l4 4-4 4z" stroke="#d8893a" strokeWidth="2" fill="#d8893a" />
                    <path d="M13 21h2m2 0h2m2 0h2" stroke="#111" strokeWidth="2" />
                </svg>
            </button>
            <button
                aria-label="测量点"
                className={clsx(
                    "size-[38px] rounded-[4px] border-2 flex items-center justify-center",
                    active ?
                        "border-[#8c5a45] bg-gradient-to-b from-[#f39a6a] via-[#f9b28b] to-[#f07a3c]"
                    :   "border-[#7d7d7d] bg-gradient-to-b from-white to-[#d8d8d8]"
                )}
            >
                <svg viewBox="0 0 32 32" className="size-8" fill="none" aria-hidden="true">
                    <path d="M3 9v14M29 9v14M4 16h24M9 13l-5 3 5 3M23 13l5 3-5 3" stroke="#c4223a" strokeWidth="2" />
                    <path d="M14 7l4 5m0-5-4 5" stroke="#b5152f" strokeWidth="1.500" />
                    <path d={active ? "M2 26h22" : "M9 26h20"} stroke="#333" strokeWidth="1.500" />
                    <circle cx={active ? 27 : 5} cy="26" r="3" fill="#b5152f" />
                </svg>
            </button>
        </div>
    );
}

function Check({ id, label, checked, onChange }: { id: string; label: string; checked: boolean; onChange: (on: boolean) => void }) {
    return (
        <div className="relative flex items-center gap-[3px]">
            <input
                id={id}
                type="checkbox"
                checked={checked}
                onChange={e => onChange(e.target.checked)}
                className="size-[19px] appearance-none rounded-[3px] border-2 border-[#858585] bg-gradient-to-b from-[#d4d4d4] to-[#f2f2f2] checked:border-[#4f6f80] checked:from-[#b6e4f6] checked:to-[#8ccfe8]"
            />
            {checked && (
                <svg viewBox="0 0 14 14" className="pointer-events-none absolute left-[3px] size-3.5" fill="none" aria-hidden="true">
                    <path d="M1 6l5 6 7-10" stroke="#15487c" strokeWidth="3" />
                </svg>
            )}
            <label htmlFor={id}>{label}</label>
        </div>
    );
}

const footerButton = "w-[65px] h-[22px] rounded-[4px] border-2 text-[15px] leading-[18px] flex items-center";

function MeasureDialog() {
    const [exact, setExact] = useState(true);
    const [associative, setAssociative] = useState(false);

    return (
        <form
            className="relative w-[362px] bg-[#e7e7e7] border-b-10 border-[#1c1c1c] rounded-b-[6px] text-[15px]"
            onSubmit={e => e.preventDefault()}
        >
            <div className="h-[27px] flex items-center bg-gradient-to-b from-[#5a5a5a] via-[#1e1e1e] to-[#1a1a1a] text-white">
                <button type="button" aria-label="对话框选项" className="w-[26px] h-full flex items-center justify-center border-r border-[#777]">
                    <svg viewBox="0 0 18 18" className="size-[18px] mt-1" fill="none" stroke="#fff" aria-hidden="true">
                        <circle cx="9" cy="9" r="5" strokeWidth="2.500" />
                        <circle cx="9" cy="9" r="7" strokeWidth="2.500" strokeDasharray="2.500 3" />
                    </svg>
                </button>
                <h1 className="flex-1 pl-3 text-[16px] leading-6 font-bold">测量距离</h1>
                <button type="button" aria-label="重置" className="w-7 h-full flex items-center justify-center border-l border-[#777]">
                    <svg viewBox="0 0 16 16" className="size-4" fill="none" aria-hidden="true">
                        <path d="M8 3q6 0 6 5.500T8 14q-5 0-6-4" stroke="#fff" strokeWidth="3" />
                    </svg>
                </button>
                <button type="button" aria-label="关闭" className="w-[26px] h-full flex items-center justify-center border-l border-[#777]">
                    <svg viewBox="0 0 14 14" className="size-3.5" aria-hidden="true">
                        <path d="M1 1l12 12M13 1 1 13" stroke="#fff" strokeWidth="3.500" />
                    </svg>
                </button>
            </div>

            <div className="px-[7px] pt-[5px] pb-3.5 border-x border-[#f6f6f6]">
                <Section title="类型" height="h-[52px]">
                    <div className="relative pt-2.5">
                        <Combo
                            label="类型"
                            options={["距离"]}
                            height="h-[30px]"
                            className="w-full"
                            text="pl-7 text-white bg-[#0f7fd2]! border border-dotted border-[#222]"
                        />
                        <Icon name="distance" className="pointer-events-none absolute left-1.5 top-4 size-[18px]" />
                    </div>
                </Section>
                <Section title="起点" height="h-[60px]">
                    <PointRow />
                </Section>
                <Section title="终点" height="h-[60px]">
                    <PointRow active />
                </Section>
                <Section title="测量" height="h-[72px]">
                    <div className="h-full pb-[3px] flex flex-col justify-center gap-[5px]">
                        <div className="flex items-center justify-between">
                            距离
                            <Combo label="距离" options={["最小值"]} className="w-[133px]" text="pl-1 text-black" />
                        </div>
                        <Check id="exact" label="始终精确" checked={exact} onChange={setExact} />
                    </div>
                </Section>
                <Section title="关联测量和检查" height="h-[72px]">
                    <div className="h-full pb-0.5 flex flex-col justify-center gap-[5px]">
                        <Check id="associative" label="关联" checked={associative} onChange={setAssociative} />
                        <div className="flex items-center justify-between text-[#a0a0a0]">
                            需求
                            <Combo disabled label="需求" options={["无"]} className="w-[133px]" text="pl-1 text-[#8e8e8e]" />
                        </div>
                    </div>
                </Section>
                <Section title="结果显示" />
                <Section title="设置" />
                <div className="mt-1 border-t border-[#c4c4c4]" />
                <div className="mt-2 pr-3 flex justify-end gap-[9px]">
                    <button className={clsx(footerButton, "justify-between border-[#7c7c7c] bg-gradient-to-b from-[#fafafa] via-[#dcdcdc] to-[#f4f4f4]")}>
                        <span>&lt;</span>
                        <span>确定</span>
                        <span>&gt;</span>
                    </button>
                    <button className={clsx(footerButton, "justify-center border-[#4f7a45] bg-gradient-to-b from-[#c9f5b4] via-[#86dc68] to-[#aaf58c]")}>
                        应用
                    </button>
                    <button className={clsx(footerButton, "justify-center border-[#7c7c7c] bg-gradient-to-b from-[#fafafa] via-[#dcdcdc] to-[#f4f4f4]")}>
                        取消
                    </button>
                </div>
            </div>
        </form>
    );
}

function Scene() {
    return (
        <svg
            viewBox="74 176 1846 904"
            preserveAspectRatio="xMinYMin slice"
            className="absolute inset-0 size-full"
            fill="none"
            aria-hidden="true"
        >
            <path d="M1448 557 1552 584 1641 608 1739 632 1812 648 1920 667V1080H1158z" fill="#8ccafa" />
            <path d="M1448 557 1552 584 1641 608 1739 632 1812 648 1920 667" stroke="#5b55c8" strokeWidth="1.500" />
            <circle cx="993" cy="487" r="36" fill="#3b2bc4" />
            <path d="M436 366 585 392 760 422 970 458 1041 467 1120 484 1250 509 1447 556" stroke="#6d5fc4" strokeWidth="1.800" />
            <path
                d="M436 366 533 394 637 421 740 445 850 470 960 491 1027 502 1160 521 1277 537 1447 556"
                stroke="#e8661f"
                strokeWidth="4"
                strokeLinejoin="round"
            />
            <path d="M959 491 1025 502" stroke="#e85af0" strokeWidth="4" />

            <path d="M999 457v42" stroke="#8b9a4a" strokeWidth="1.500" />
            <path d="M1002 463q12-2 22 3" stroke="#a03aa0" strokeWidth="3" />
            <path d="M1000 476q10 0 10 11t-10 12z" fill="#8f8f8f" />
            <path d="M1010 465l31 3" stroke="#888" />
            <circle cx="994" cy="488" r="13" stroke="#222" strokeWidth="4" strokeDasharray="15 5" strokeDashoffset="-3" />
            <circle cx="994" cy="488" r="13" stroke="#e8e8e8" strokeWidth="1.800" strokeDasharray="15 5" strokeDashoffset="-3" />
            <path d="M994 469v38M975 488h38" stroke="#111" strokeWidth="5" />
            <path d="M994 470v36M976 488h36" stroke="#fff" strokeWidth="2" />

            <path d="M123 1008 148 993 160 994 172 1018 150 1033 137 1031z" fill="#b3aeb6" stroke="#8d7f8d" />
            <path d="M123 1008 147 1003 160 994M147 1003 158 1022M172 1018 158 1022 137 1031" stroke="#7d6d7d" />
            <path d="M150 1033 184 1012" stroke="#c8283c" strokeWidth="2.500" />
            <path d="M175 1014 191 1008 179 1020z" fill="#c8283c" />
            <path d="M147 1031 129 999" stroke="#1230c8" strokeWidth="3.500" />
            <path d="M126 992 136 1003 128 1007z" fill="#1230c8" />
            <path d="M131 1036 148 1034" stroke="#3a8a3a" strokeWidth="2" />
            <circle cx="149" cy="1034" r="5" fill="#e6e6e6" />
            <g fontFamily="Liberation Sans, sans-serif" fontSize="13">
                <text x="118" y="990" fill="#3a3ad0">Z</text>
                <text x="190" y="1011" fill="#b42a40">X</text>
                <text x="120" y="1041" fill="#3a8a3a">Y</text>
            </g>
        </svg>
    );
}

export default function App() {
    return (
        <div className="min-h-screen flex flex-col overflow-hidden bg-[#d6d6d6] text-black font-['Liberation_Sans','Noto_Sans_CJK_SC',sans-serif]">
            <svg className="absolute size-0" aria-hidden="true">
                <defs>
                    <linearGradient id="blue" x1="0" y1="0" x2="1" y2="1">
                        <stop offset="0" stopColor="#e6efff" />
                        <stop offset="1" stopColor="#5578dc" />
                    </linearGradient>
                    <linearGradient id="tube" x1=".3" y1="0" x2=".7" y2="1">
                        <stop offset="0" stopColor="#8393cc" />
                        <stop offset=".4" stopColor="#e8efff" />
                        <stop offset="1" stopColor="#6478b4" />
                    </linearGradient>
                    <linearGradient id="cyl">
                        <stop offset="0" stopColor="#6f86ea" />
                        <stop offset=".4" stopColor="#dfe8ff" />
                        <stop offset="1" stopColor="#5468d8" />
                    </linearGradient>
                    <linearGradient id="gold">
                        <stop offset="0" stopColor="#fbd55a" />
                        <stop offset="1" stopColor="#f08a24" />
                    </linearGradient>
                    <linearGradient id="surf" x1="0" y1="0" x2="1" y2="1">
                        <stop offset="0" stopColor="#f2f4ff" />
                        <stop offset="1" stopColor="#6470d4" />
                    </linearGradient>
                    <linearGradient id="grey" x1="0" y1="0" x2="0" y2="1">
                        <stop offset="0" stopColor="#c4c4c4" />
                        <stop offset="1" stopColor="#fafafa" />
                    </linearGradient>
                    <radialGradient id="yellow" cx=".4" cy=".35">
                        <stop offset="0" stopColor="#fbfbb4" />
                        <stop offset="1" stopColor="#d8d436" />
                    </radialGradient>
                </defs>
            </svg>
            <Toolbars />
            <div className="flex-1 flex">
                <ResourceBar />
                <CurveBar />
                <main className="relative flex-1 overflow-hidden bg-gradient-to-b from-[#262626] via-[#424344] to-[#58595a]">
                    <Scene />
                    <output className="absolute left-[942px] top-[293px] w-[102px] h-[29px] flex items-center pl-1.5 bg-gradient-to-b from-[#dedede] to-[#bdbdbd] font-['Liberation_Mono',monospace] text-xs whitespace-nowrap">
                        <span className="absolute inset-y-0 left-0 w-[13px] rounded-r-full bg-[#d0dc28]" />
                        <span className="relative">=0.077048 mm</span>
                    </output>
                    <MeasureDialog />
                </main>
            </div>
        </div>
    );
}
